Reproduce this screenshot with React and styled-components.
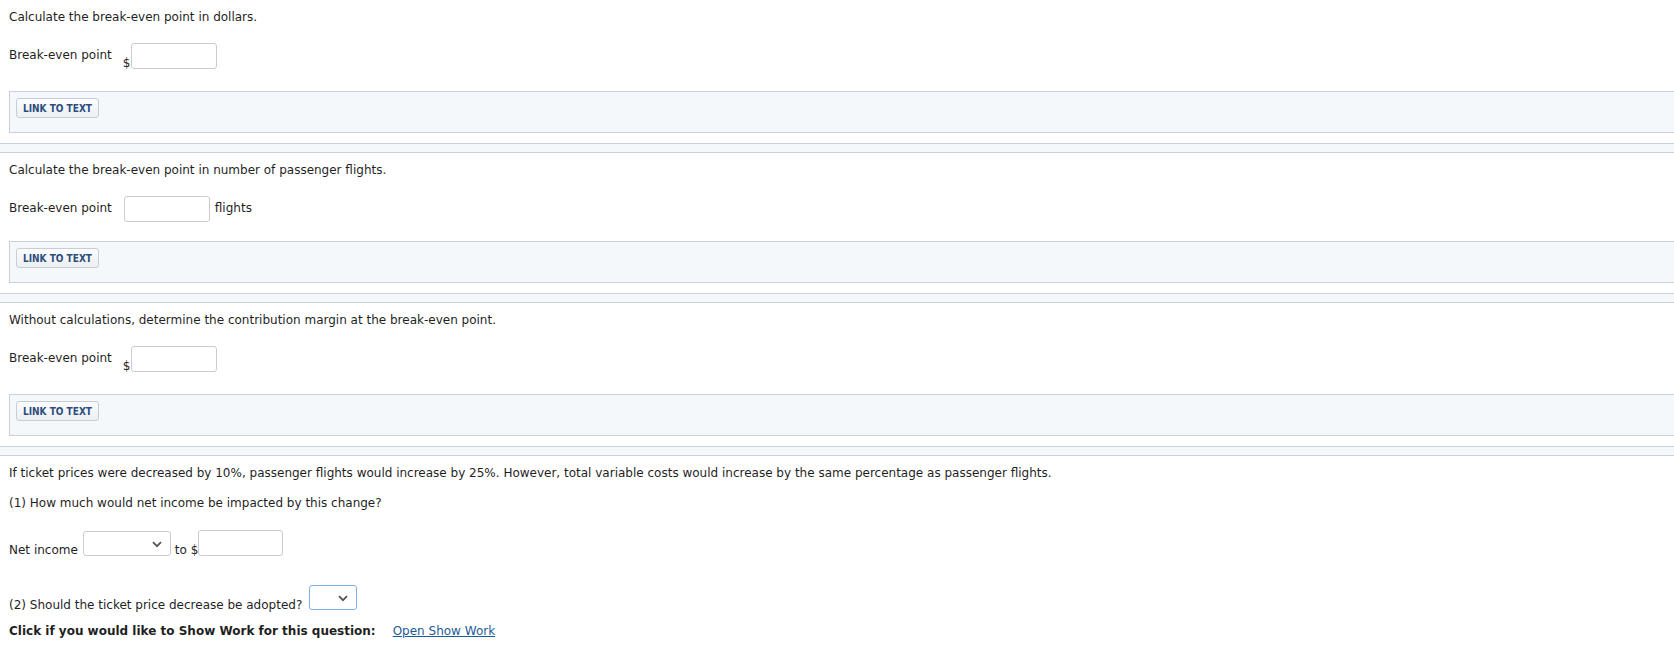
import React from "react";
import styled, { createGlobalStyle } from "styled-components";

const GlobalStyle = createGlobalStyle`
  html, body {
    margin: 0;
    padding: 0;
    background: #ffffff;
    overflow: hidden;
  }
  body {
    font-family: "DejaVu Sans", Verdana, sans-serif;
    font-size: 12px;
    color: #1f1f1f;
  }
`;

const Page = styled.div`
  width: 100%;
  overflow: hidden;
`;

const Section = styled.section`
  padding: 10px 0 0 9px;
`;

const Prompt = styled.p`
  margin: ${(p) => (p.$gap ? `${p.$gap}px` : "0")} 0 0 0;
  line-height: 15px;
`;

const AnswerRow = styled.div`
  display: flex;
  align-items: flex-start;
  margin-top: 18px;
`;

const RowLabel = styled.span`
  line-height: 15px;
  margin-top: 5px;
  margin-right: ${(p) => p.$space || 0}px;
`;

const Unit = styled.span`
  line-height: 17px;
  padding-top: 12px;
  margin-right: 1px;
`;

const TextInput = styled.input`
  box-sizing: border-box;
  width: ${(p) => p.$w || 86}px;
  height: 26px;
  margin: 0;
  padding: 0 4px;
  border: 1px solid #cccccc;
  border-radius: 3px;
  background: #ffffff;
  font: inherit;
  outline: none;
`;

const After = styled.span`
  line-height: 15px;
  margin-top: 5px;
  margin-left: 5px;
`;

const LinkBox = styled.div`
  margin-top: 19px;
  margin-right: -20px;
  padding: 6px 6px 14px 6px;
  background: #f5f8fb;
  border: 1px solid #c9d0da;
`;

const LinkButton = styled.button`
  box-sizing: border-box;
  height: 20px;
  padding: 0 6px;
  margin: 0;
  display: block;
  font-family: "DejaVu Sans Condensed", "DejaVu Sans", Verdana, sans-serif;
  font-size: 10px;
  font-weight: bold;
  color: #2c4d7e;
  background: linear-gradient(#fbfcfd, #eceff3);
  border: 1px solid #c6cdd5;
  border-radius: 3px;
  cursor: pointer;
`;

const Divider = styled.div`
  margin-top: 10px;
  height: 8px;
  background: #f5f8fb;
  border-top: 1px solid #c9d0da;
  border-bottom: 1px solid #c9d0da;
`;

const InlineRow = styled.div`
  display: flex;
  align-items: flex-end;
  margin-top: ${(p) => p.$gap}px;
`;

const InlineText = styled.span`
  line-height: 15px;
  margin-bottom: ${(p) => p.$drop || 0}px;
  margin-right: ${(p) => p.$right || 0}px;
  margin-left: ${(p) => p.$left || 0}px;
`;

const SelectBox = styled.div`
  position: relative;
  box-sizing: border-box;
  width: ${(p) => p.$w}px;
  height: 25px;
  background: #ffffff;
  border: 1px solid ${(p) => (p.$active ? "#7fb0e3" : "#cccccc")};
  border-radius: 3px;
`;

const Chevron = styled.svg`
  position: absolute;
  right: 8px;
  top: 9px;
`;

const ShowWork = styled.div`
  margin-top: 14px;
  line-height: 15px;
  display: flex;
  align-items: baseline;
`;

const Strong = styled.strong`
  font-weight: bold;
`;

const WorkLink = styled.a`
  margin-left: 17px;
  color: #1d5b98;
  text-decoration: underline;
  cursor: pointer;
`;

function Select({ w, active }) {
  return (
    <SelectBox $w={w} $active={active}>
      <Chevron width="10" height="7" viewBox="0 0 10 7">
        <path d="M1 1.2 L5 5.2 L9 1.2" fill="none" stroke="#555" strokeWidth="1.8" />
      </Chevron>
    </SelectBox>
  );
}

function LinkToText() {
  return (
    <LinkBox>
      <LinkButton>LINK TO TEXT</LinkButton>
    </LinkBox>
  );
}

export default function App() {
  return (
    <Page>
      <GlobalStyle />
      <Section>
        <Prompt>Calculate the break-even point in dollars.</Prompt>
        <AnswerRow>
          <RowLabel $space={11}>Break-even point</RowLabel>
          <Unit>$</Unit>
          <TextInput />
        </AnswerRow>
        <LinkToText />
      </Section>
      <Divider />
      <Section>
        <Prompt>Calculate the break-even point in number of passenger flights.</Prompt>
        <AnswerRow>
          <RowLabel $space={12}>Break-even point</RowLabel>
          <TextInput />
          <After>flights</After>
        </AnswerRow>
        <LinkToText />
      </Section>
      <Divider />
      <Section>
        <Prompt>Without calculations, determine the contribution margin at the break-even point.</Prompt>
        <AnswerRow>
          <RowLabel $space={11}>Break-even point</RowLabel>
          <Unit>$</Unit>
          <TextInput />
        </AnswerRow>
        <LinkToText />
      </Section>
      <Divider />
      <Section>
        <Prompt>
          If ticket prices were decreased by 10%, passenger flights would increase by 25%. However, total
          variable costs would increase by the same percentage as passenger flights.
        </Prompt>
        <Prompt $gap={15}>(1) How much would net income be impacted by this change?</Prompt>
        <InlineRow $gap={19}>
          <InlineText $drop={-2} $right={5}>Net income</InlineText>
          <Select w={88} />
          <InlineText $drop={-2} $left={4}>to $</InlineText>
          <TextInput $w={85} />
        </InlineRow>
        <InlineRow $gap={29}>
          <InlineText $drop={-3} $right={7}>(2) Should the ticket price decrease be adopted?</InlineText>
          <Select w={48} active />
        </InlineRow>
        <ShowWork>
          <Strong>Click if you would like to Show Work for this question:</Strong>
          <WorkLink>Open Show Work</WorkLink>
        </ShowWork>
      </Section>
    </Page>
  );
}
